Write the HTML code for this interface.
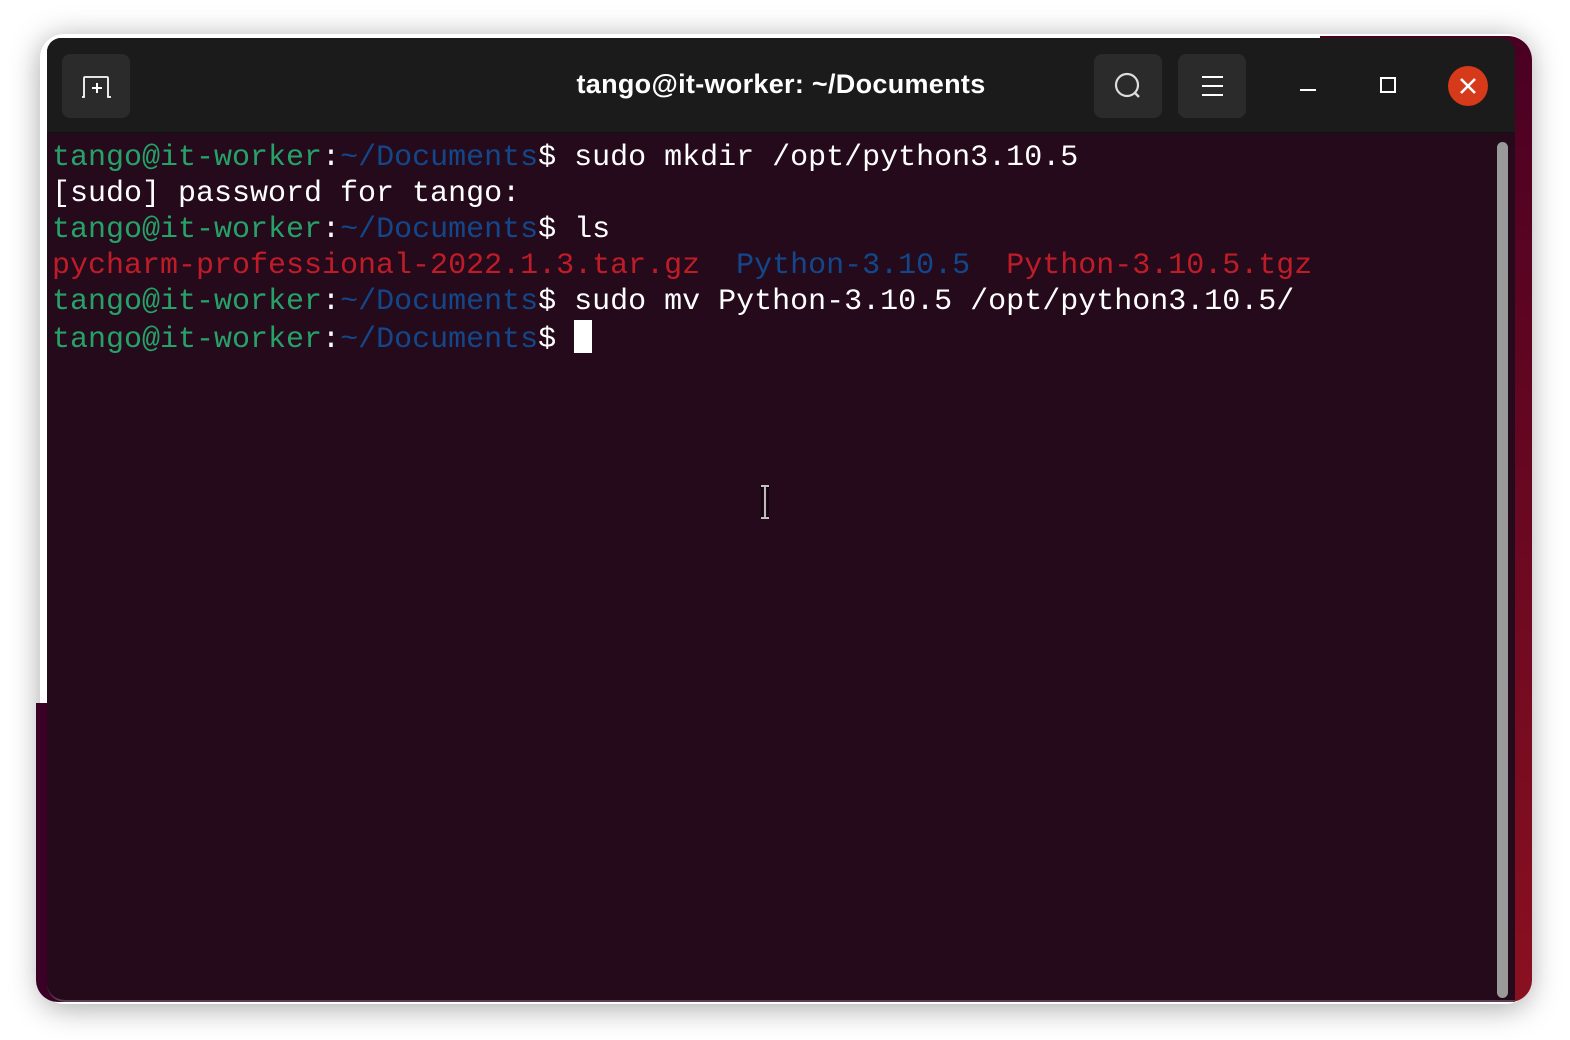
<!DOCTYPE html>
<html><head><meta charset="utf-8"><style>
html,body{margin:0;padding:0}
body{width:1570px;height:1040px;background:#fff;position:relative;overflow:hidden;font-family:"Liberation Sans",sans-serif}
.shadow{position:absolute;left:40px;top:34px;width:1490px;height:970px;border-radius:24px;box-shadow:0 4px 30px rgba(0,0,0,.35)}
.leftstrip{position:absolute;left:36px;top:703px;width:30px;height:299px;background:#3a0026;border-radius:0 0 0 22px}
.rightstrip{position:absolute;left:1320px;top:36px;width:212px;height:966px;background:linear-gradient(180deg,#4a0022,#8a1020);border-radius:0 24px 22px 0}
.win{position:absolute;left:47px;top:38px;width:1468px;height:962px;background:#250a1c;border-radius:14px 14px 0 18px;overflow:hidden;border-bottom:2px solid #5a4050}
.hdr{position:absolute;left:0;top:0;width:100%;height:94px;background:#1b1b1b;border-bottom:1px solid #111}
.btn{position:absolute;top:16px;width:68px;height:64px;background:#2b2b2b;border-radius:8px}
.title{position:absolute;left:0;width:100%;top:31px;text-align:center;color:#fff;font-weight:bold;font-size:27px;letter-spacing:0.3px}
.term{position:absolute;left:5px;top:102px;font-family:"Liberation Mono",monospace;font-size:30px;line-height:36px;color:#fff;white-space:pre}
.g{color:#26a269}.b{color:#12488b}.r{color:#c01c28}
.cur{display:inline-block;width:18px;height:33px;background:#fff;vertical-align:-6px}
.sb{position:absolute;left:1450px;top:104px;width:11px;height:856px;background:#9a9a9a;border-radius:6px}
</style></head><body>
<div class="shadow"></div>
<div class="rightstrip"></div>
<div class="leftstrip"></div>
<div class="win">
 <div class="hdr">
  <div class="btn" style="left:15px"><svg width="68" height="64"><path d="M20 43 H22 V24 Q22 23 23 23 H45 Q46 23 46 24 V43 H49" stroke="#fff" stroke-width="1.8" fill="none"/><path d="M35 29 V39 M30 34 H40" stroke="#fff" stroke-width="2"/></svg></div>
  <div class="title">tango@it-worker: ~/Documents</div>
  <div class="btn" style="left:1047px"><svg width="68" height="64"><circle cx="33" cy="31" r="11" stroke="#ddd" stroke-width="2.2" fill="none"/><path d="M41 39 L45 43" stroke="#ddd" stroke-width="2.4"/></svg></div>
  <div class="btn" style="left:1131px"><svg width="68" height="64"><path d="M24 23 H45 M24 32 H45 M24 41 H45" stroke="#fff" stroke-width="2"/></svg></div>
  <svg style="position:absolute;left:1240px;top:32px" width="40" height="30"><path d="M13 20 H29" stroke="#fff" stroke-width="2"/></svg>
  <svg style="position:absolute;left:1320px;top:32px" width="40" height="30"><rect x="14" y="8" width="14" height="14" stroke="#fff" stroke-width="2" fill="none"/></svg>
  <svg style="position:absolute;left:1400px;top:27px" width="42" height="42"><circle cx="21" cy="21" r="20" fill="#d7391b"/><path d="M14 14 L28 28 M28 14 L14 28" stroke="#fff" stroke-width="2.6"/></svg>
 </div>
 <div class="term"><span class="g">tango@it-worker</span>:<span class="b">~/Documents</span>$ sudo mkdir /opt/python3.10.5
[sudo] password for tango: 
<span class="g">tango@it-worker</span>:<span class="b">~/Documents</span>$ ls
<span class="r">pycharm-professional-2022.1.3.tar.gz</span>  <span class="b">Python-3.10.5</span>  <span class="r">Python-3.10.5.tgz</span>
<span class="g">tango@it-worker</span>:<span class="b">~/Documents</span>$ sudo mv Python-3.10.5 /opt/python3.10.5/
<span class="g">tango@it-worker</span>:<span class="b">~/Documents</span>$ <span class="cur"></span></div>
 <div class="sb"></div>
 <svg style="position:absolute;left:708px;top:446px" width="20" height="36"><path d="M5 3 H15 M5 33 H15 M10 3 V33 M7 3 V33 M13 3 V33" stroke="#000" stroke-width="1"/><path d="M6 2 H14 M6 34 H14 M10 3 V33" stroke="#fff" stroke-width="1.4"/></svg>
</div>
</body></html>
